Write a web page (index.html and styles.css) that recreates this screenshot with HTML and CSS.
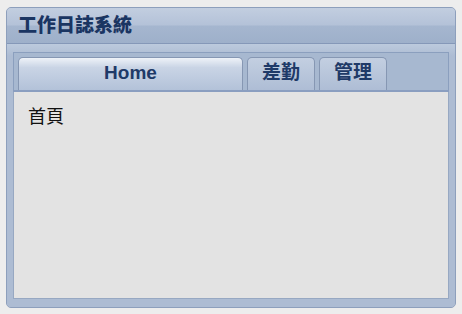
FILE: index.html
```html
<!DOCTYPE html>
<html lang="zh-Hant">
<head>
    <meta charset="UTF-8">
    <meta name="viewport" content="width=device-width, initial-scale=1.0">
    <title>工作日誌系統</title>
    <link rel="stylesheet" href="styles.css">
</head>
<body>
    <div class="window">
        <div class="title-bar">工作日誌系統</div>
        <div class="panel">
            <div class="tabs">
                <div class="tab tab-home active">Home</div>
                <div class="tab">差勤</div>
                <div class="tab">管理</div>
            </div>
            <div class="content">首頁</div>
        </div>
    </div>
</body>
</html>
```

FILE: styles.css
```css
body {
    margin: 0;
    padding: 7px 6px;
    background: #ededed;
    font-family: "Liberation Sans", "Noto Sans CJK TC", sans-serif;
}

.window {
    width: 448px;
    height: 299px;
    border: 1px solid #8d9fbc;
    border-radius: 5px;
    background: #adbcd3;
    display: flex;
    flex-direction: column;
    overflow: hidden;
}

.title-bar {
    height: 35px;
    line-height: 36px;
    padding-left: 11px;
    background: linear-gradient(#c2cee0, #b4c2d8 48%, #a5b6cf 52%, #9eb0ca);
    border-bottom: 1px solid #8598b8;
    color: #1a3562;
    font-size: 19px;
    font-weight: 900;
}

.panel {
    flex: 1;
    display: flex;
    flex-direction: column;
    padding: 8px 6px 8px 6px;
    background: linear-gradient(#bccadd, #adbcd3 12px);
}

.tabs {
    height: 34px;
    display: flex;
    align-items: flex-end;
    gap: 4px;
    padding: 3px 0 0 4px;
    border: 1px solid #8b9fbe;
    border-bottom: 2px solid #8a9ec0;
    background: #a7b8d0;
}

.tab {
    width: 66px;
    height: 32px;
    line-height: 30px;
    text-align: center;
    border: 1px solid #8697b3;
    border-bottom: none;
    border-radius: 5px 5px 0 0;
    background: linear-gradient(#c3cfe1, #aebdd5);
    color: #1f3a68;
    font-size: 19px;
    font-weight: bold;
}

.tab-home {
    width: 223px;
}

.tab.active {
    background: linear-gradient(#eef2f8, #c9d4e5 30%, #b3c2d9);
}

.content {
    flex: 1;
    padding: 10px 14px;
    background: #e3e3e3;
    border: 1px solid #97a8c2;
    border-top: none;
    color: #111;
    font-size: 18px;
}
```
